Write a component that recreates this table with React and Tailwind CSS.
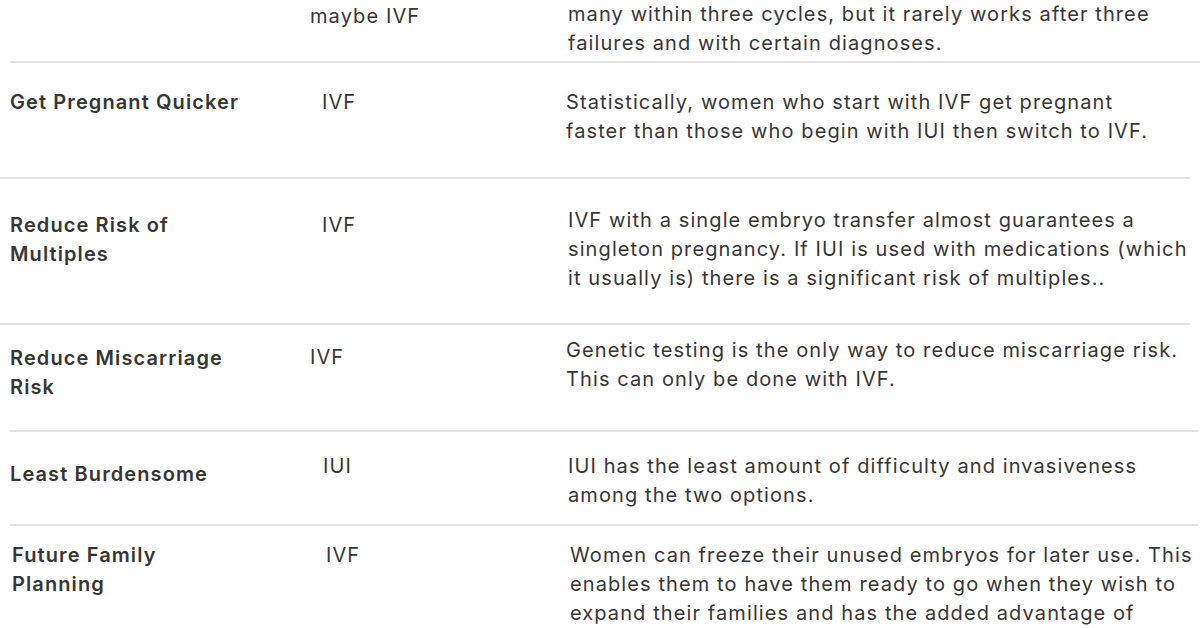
import React from 'react';

const rows = [
  {
    height: 'h-[61px]',
    line: 'ml-[10px] mr-0',
    cells: [
      { className: 'w-[310px] pl-[10px] pt-0', lines: [] },
      { className: 'w-[258px] pt-[2px]', lines: ['maybe IVF'] },
      {
        className: 'pt-0',
        lines: [
          'many within three cycles, but it rarely works after three',
          'failures and with certain diagnoses.',
        ],
      },
    ],
  },
  {
    height: 'h-[114px]',
    line: 'ml-0 mr-[10px]',
    cells: [
      { className: 'w-[322px] pl-[10px] pt-[25px]', lines: ['Get Pregnant Quicker'] },
      { className: 'w-[244px] pt-[25px]', lines: ['IVF'] },
      {
        className: 'pt-[25px]',
        lines: [
          'Statistically, women who start with IVF get pregnant',
          'faster than those who begin with IUI then switch to IVF.',
        ],
      },
    ],
  },
  {
    height: 'h-[144px]',
    line: 'ml-0 mr-[10px]',
    cells: [
      { className: 'w-[322px] pl-[10px] pt-[32px]', lines: ['Reduce Risk of', 'Multiples'] },
      { className: 'w-[246px] pt-[32px]', lines: ['IVF'] },
      {
        className: 'pt-[27px]',
        lines: [
          'IVF with a single embryo transfer almost guarantees a',
          'singleton pregnancy. If IUI is used with medications (which',
          'it usually is) there is a significant risk of multiples..',
        ],
      },
    ],
  },
  {
    height: 'h-[105px]',
    line: 'ml-[10px] mr-[2px]',
    cells: [
      { className: 'w-[310px] pl-[10px] pt-[19px]', lines: ['Reduce Miscarriage', 'Risk'] },
      { className: 'w-[256px] pt-[18px]', lines: ['IVF'] },
      {
        className: 'pt-[11px]',
        lines: [
          'Genetic testing is the only way to reduce miscarriage risk.',
          'This can only be done with IVF.',
        ],
      },
    ],
  },
  {
    height: 'h-[92px]',
    line: 'ml-[10px] mr-[2px]',
    cells: [
      { className: 'w-[323px] pl-[10px] pt-[28px]', lines: ['Least Burdensome'] },
      { className: 'w-[245px] pt-[20px]', lines: ['IUI'] },
      {
        className: 'pt-[20px]',
        lines: [
          'IUI has the least amount of difficulty and invasiveness',
          'among the two options.',
        ],
      },
    ],
  },
  {
    height: 'h-[110px]',
    line: 'hidden',
    cells: [
      { className: 'w-[326px] pl-[12px] pt-[15px]', lines: ['Future Family', 'Planning'] },
      { className: 'w-[244px] pt-[15px]', lines: ['IVF'] },
      {
        className: 'pt-[15px]',
        lines: [
          'Women can freeze their unused embryos for later use. This',
          'enables them to have them ready to go when they wish to',
          'expand their families and has the added advantage of',
        ],
      },
    ],
  },
];

const Cell = ({ cell, index }) => (
  <div
    className={`${cell.className} ${
      index === 0 ? 'font-semibold shrink-0' : index === 1 ? 'shrink-0' : 'flex-1'
    }`}
  >
    {cell.lines.map((line, i) => (
      <div key={i} className="whitespace-nowrap">
        {line}
      </div>
    ))}
  </div>
);

const App = () => {
  return (
    <div className="w-[1200px] h-[628px] overflow-hidden bg-white text-[#363636] text-[20px] leading-[29px] tracking-[0.055em] font-['Inter',sans-serif]">
      {rows.map((row, r) => (
        <div key={r}>
          <div className={`flex ${row.height}`}>
            {row.cells.map((cell, c) => (
              <Cell key={c} cell={cell} index={c} />
            ))}
          </div>
          <div className={`h-[2px] bg-[#e3e3e3] ${row.line}`} />
        </div>
      ))}
    </div>
  );
};

export default App;
